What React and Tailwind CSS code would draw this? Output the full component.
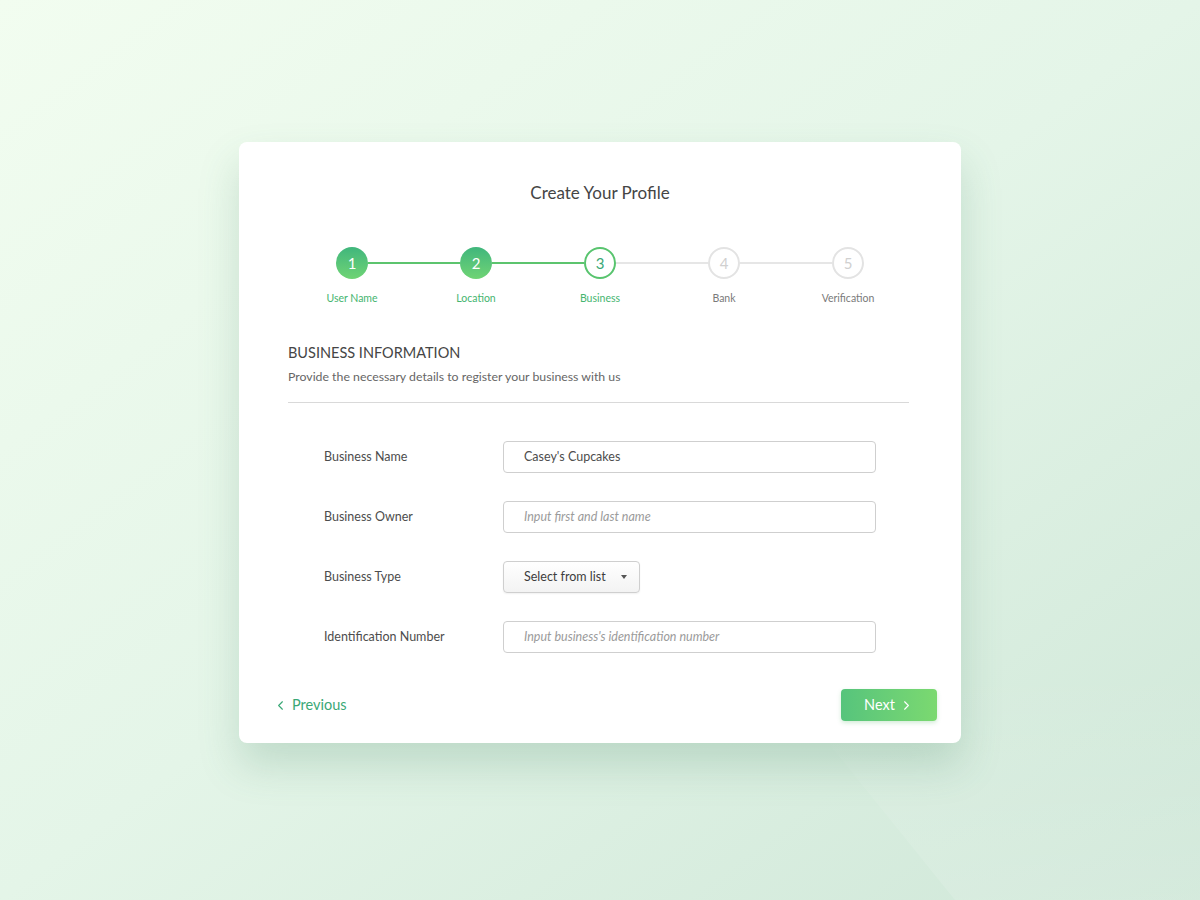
import React from "react";
import { ChevronLeft, ChevronRight } from "lucide-react";

const steps = [
  { n: 1, label: "User Name", state: "done" },
  { n: 2, label: "Location", state: "done" },
  { n: 3, label: "Business", state: "current" },
  { n: 4, label: "Bank", state: "todo" },
  { n: 5, label: "Verification", state: "todo" },
];

const StepCircle = ({ step }) => {
  if (step.state === "done") {
    return (
      <div className="w-8 h-8 rounded-full bg-gradient-to-b from-[#3fb67c] to-[#6fd474] flex items-center justify-center text-white text-[15px] shrink-0">
        {step.n}
      </div>
    );
  }
  if (step.state === "current") {
    return (
      <div className="w-8 h-8 rounded-full border-2 border-[#58c46e] bg-white flex items-center justify-center text-[#3aa876] text-[15px] shrink-0">
        {step.n}
      </div>
    );
  }
  return (
    <div className="w-8 h-8 rounded-full border-2 border-[#e3e3e3] bg-white flex items-center justify-center text-[#d0d0d0] text-[15px] shrink-0">
      {step.n}
    </div>
  );
};

const Stepper = () => (
  <div className="mx-auto w-[620px]">
    <div className="flex items-center px-[46px]">
      {steps.map((s, i) => (
        <React.Fragment key={s.n}>
          <StepCircle step={s} />
          {i < steps.length - 1 && (
            <div className={"flex-1 h-[2px] " + (i < 2 ? "bg-[#5cc46e]" : "bg-[#e6e6e6]")} />
          )}
        </React.Fragment>
      ))}
    </div>
    <div className="grid grid-cols-5 mt-3">
      {steps.map((s) => (
        <div
          key={s.n}
          className={
            "text-center text-[10.5px] leading-[14px] " +
            (s.state === "todo" ? "text-[#7a7a7a]" : "text-[#45b56f]")
          }
        >
          {s.label}
        </div>
      ))}
    </div>
  </div>
);

const FormRow = ({ label, children }) => (
  <div className="flex items-center h-8">
    <div className="w-[179px] text-[12.5px] text-[#4d4d4d]">{label}</div>
    {children}
  </div>
);

const TextInput = ({ value, placeholder }) => (
  <div className="w-[373px] h-8 rounded-[4px] border border-[#cfcfcf] bg-white flex items-center px-5 text-[12.5px]">
    {value ? (
      <span className="text-[#4d4d4d]">{value}</span>
    ) : (
      <span className="text-[#9b9b9b] italic">{placeholder}</span>
    )}
  </div>
);

export default function App() {
  return (
    <div
      className="relative w-full h-[900px] overflow-hidden bg-gradient-to-br from-[#f2fdf0] via-[#e4f5e8] to-[#cfe7d8]"
      style={{ fontFamily: "Lato, 'Open Sans', sans-serif" }}
    >
      {/* faint diagonal light panel, bottom right */}
      <svg className="absolute inset-0 w-full h-full" viewBox="0 0 1200 900" preserveAspectRatio="none">
        <defs>
          <linearGradient id="fade" x1="0" y1="1" x2="0" y2="0">
            <stop offset="0" stopColor="#ffffff" stopOpacity="0.12" />
            <stop offset="0.7" stopColor="#ffffff" stopOpacity="0" />
          </linearGradient>
        </defs>
        <polygon points="830,745 955,900 1200,900 1200,560 780,560" fill="url(#fade)" />
      </svg>

      <div className="relative flex justify-center pt-[142px]">
        <div className="w-[722px] h-[601px] bg-white rounded-[8px] shadow-[0_22px_40px_rgba(70,130,100,0.22)]">
          <h1 className="pt-[39px] text-center text-[17px] leading-6 text-[#454545]">Create Your Profile</h1>

          <div className="mt-[42px]">
            <Stepper />
          </div>

          <div className="pl-[49px] pr-[52px] mt-[38px]">
            <h2 className="text-[14.5px] leading-5 text-[#454545] uppercase">Business Information</h2>
            <p className="mt-[6px] text-[12.3px] leading-4 text-[#666]">
              Provide the necessary details to register your business with us
            </p>
            <div className="mt-[17px] h-px bg-[#d9d9d9]" />

            <div className="mt-[38px] pl-9 flex flex-col gap-7">
              <FormRow label="Business Name">
                <TextInput value="Casey's Cupcakes" />
              </FormRow>
              <FormRow label="Business Owner">
                <TextInput placeholder="Input first and last name" />
              </FormRow>
              <FormRow label="Business Type">
                <div className="w-[137px] h-8 rounded-[4px] border border-[#cfcfcf] bg-gradient-to-b from-white to-[#f3f3f3] shadow-[0_1px_2px_rgba(0,0,0,0.06)] flex items-center pl-5 pr-[12px] text-[12.5px] text-[#3d3d3d]">
                  <span className="flex-1">Select from list</span>
                  <svg width="6" height="4" viewBox="0 0 6 4">
                    <polygon points="0,0 6,0 3,4" fill="#555" />
                  </svg>
                </div>
              </FormRow>
              <FormRow label="Identification Number">
                <TextInput placeholder="Input business's identification number" />
              </FormRow>
            </div>
          </div>

          <div className="mt-9 pl-[34px] pr-6 flex items-center justify-between">
            <button className="flex items-center gap-1 text-[14.5px] text-[#3aa876]">
              <ChevronLeft size={15} strokeWidth={1.8} />
              Previous
            </button>
            <button className="w-24 h-8 rounded-[4px] bg-gradient-to-r from-[#56c47c] to-[#7bd970] text-white text-[14.5px] flex items-center justify-center gap-1 shadow-[0_2px_4px_rgba(80,180,100,0.25)]">
              Next
              <ChevronRight size={15} strokeWidth={1.8} />
            </button>
          </div>
        </div>
      </div>
    </div>
  );
}
